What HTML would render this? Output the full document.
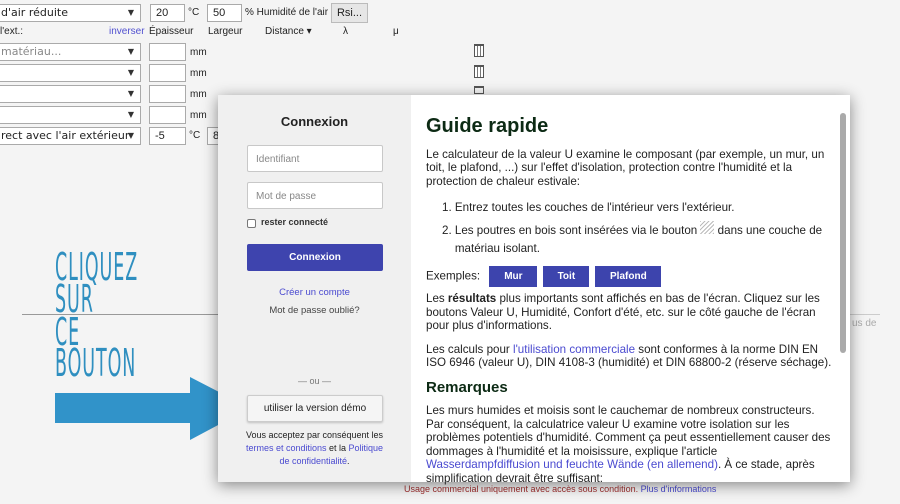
<!DOCTYPE html>
<html><head><meta charset="utf-8"><style>
*{margin:0;padding:0;box-sizing:border-box}
body{width:900px;height:504px;overflow:hidden;background:#f4f4f4;font-family:"Liberation Sans",Arial,sans-serif;position:relative;color:#222}
.a{position:absolute}
.sel{position:absolute;background:#fff;border:1px solid #aaa;height:18px;line-height:16px;padding-left:2px;font-family:"DejaVu Sans",sans-serif;font-size:11px}
.sel:after{content:"▼";position:absolute;right:6px;top:0;font-size:8px;color:#333}
.in{position:absolute;background:#fff;border:1px solid #aaa;height:18px;font-size:11px;line-height:16px;padding-left:5px}
.s{font-size:10px;position:absolute}
.cl{position:absolute;left:55px;color:#2f8fc0;font-size:38px;line-height:34px;font-family:"DejaVu Sans",sans-serif;font-weight:normal;transform:scaleX(0.46);transform-origin:left;letter-spacing:2px}
.modal{position:absolute;left:218px;top:95px;width:632px;height:387px;background:#fff;box-shadow:0 3px 14px rgba(0,0,0,.45)}
.lp{position:absolute;left:0;top:0;width:193px;height:387px;background:#f0f0f0;text-align:center}
.fi{position:absolute;left:29px;width:136px;height:27px;background:#fff;border:1px solid #c8c8c8;border-radius:2px;font-size:10px;color:#888;text-align:left;padding:8px 8px}
.btn{position:absolute;left:29px;width:136px;height:27px;border-radius:2px;font-size:11px}
.rp{position:absolute;left:208px;top:0;width:408px;font-size:11.6px;line-height:13.5px;color:#222}
.rp p{margin-bottom:10px}
a{color:#4a4ad0;text-decoration:none}
.eb{display:inline-block;background:#3d44ad;color:#fff;font-weight:bold;font-size:10px;height:21px;line-height:21px;text-align:center;margin-left:6px;vertical-align:middle}
</style></head><body>
<div class="sel" style="left:-2px;top:4px;width:143px;height:18px">d'air réduite</div>
<div class="in" style="left:150px;top:4px;width:35px">20</div><div class="s" style="left:188px;top:7px">°C</div>
<div class="in" style="left:207px;top:4px;width:35px">50</div><div class="s" style="left:245px;top:7px">% Humidité de l'air</div>
<div class="a" style="left:331px;top:3px;width:37px;height:20px;background:#e6e6e6;border:1px solid #bbb;font-size:11px;line-height:18px;text-align:center">Rsi...</div>
<div class="s" style="left:0;top:26px">l'ext.:</div>
<div class="s" style="left:109px;top:26px;color:#5050d0">inverser</div>
<div class="s" style="left:149px;top:26px">Épaisseur</div>
<div class="s" style="left:208px;top:26px">Largeur</div>
<div class="s" style="left:265px;top:26px">Distance ▾</div>
<div class="s" style="left:343px;top:26px">λ</div>
<div class="s" style="left:393px;top:26px">μ</div>
<div class="sel" style="left:-2px;top:43px;width:143px;color:#888">matériau...</div>
<div class="in" style="left:149px;top:43px;width:37px"></div><div class="s" style="left:190px;top:47px">mm</div>
<div class="sel" style="left:-2px;top:64px;width:143px"></div>
<div class="in" style="left:149px;top:64px;width:37px"></div><div class="s" style="left:190px;top:68px">mm</div>
<div class="sel" style="left:-2px;top:85px;width:143px"></div>
<div class="in" style="left:149px;top:85px;width:37px"></div><div class="s" style="left:190px;top:89px">mm</div>
<div class="sel" style="left:-2px;top:106px;width:143px"></div>
<div class="in" style="left:149px;top:106px;width:37px"></div><div class="s" style="left:190px;top:110px">mm</div>
<div class="sel" style="left:-2px;top:127px;width:143px">rect avec l'air extérieur</div>
<div class="in" style="left:149px;top:127px;width:37px">-5</div><div class="s" style="left:189px;top:130px">°C</div>
<div class="in" style="left:207px;top:127px;width:20px">8</div>
<div class="a" style="left:474px;top:44px;width:10px;height:13px;border:1px solid #555;border-top:2px solid #555;background:repeating-linear-gradient(90deg,#fff 0 2px,#777 2px 3px)"></div>
<div class="a" style="left:474px;top:65px;width:10px;height:13px;border:1px solid #555;border-top:2px solid #555;background:repeating-linear-gradient(90deg,#fff 0 2px,#777 2px 3px)"></div>
<div class="a" style="left:474px;top:86px;width:10px;height:8px;border:1px solid #555;border-top:2px solid #555"></div>
<div class="a" style="left:22px;top:314px;width:200px;height:1px;background:#999"></div>
<div class="a" style="left:850px;top:314px;width:30px;height:1px;background:#ccc"></div>
<div class="s" style="left:852px;top:318px;color:#aaa">us de</div>
<div class="cl" style="top:250px">CLIQUEZ</div>
<div class="cl" style="top:282px">SUR</div>
<div class="cl" style="top:315px">CE</div>
<div class="cl" style="top:346px">BOUTON</div>
<svg class="a" style="left:0;top:0" width="900" height="504"><polygon points="55,393 190,393 190,377 250,408 190,440 190,423 55,423" fill="#3193c9"/></svg>
<div class="a" style="left:404px;top:484px;font-size:9px;color:#a03030">Usage commercial uniquement avec accès sous condition. <span style="color:#4a4ad0">Plus d'informations</span></div>
<div class="modal">
<div class="lp">
<div class="a" style="left:0;width:193px;top:19px;font-size:13px;font-weight:bold">Connexion</div>
<div class="fi" style="top:50px">Identifiant</div>
<div class="fi" style="top:87px">Mot de passe</div>
<div class="a" style="left:29px;top:124px;width:9px;height:9px;border:1px solid #777;background:#fff;border-radius:2px"></div>
<div class="a" style="left:43px;top:122px;font-size:9px;font-weight:bold;color:#333">rester connecté</div>
<div class="btn" style="top:149px;background:#3e44ae;color:#fff;font-weight:bold;line-height:27px;font-size:10px">Connexion</div>
<div class="a" style="left:0;width:193px;top:192px;font-size:9.5px;color:#4a4ad0">Créer un compte</div>
<div class="a" style="left:0;width:193px;top:210px;font-size:9.5px;color:#444">Mot de passe oublié?</div>
<div class="a" style="left:0;width:193px;top:281px;font-size:9px;color:#777">— ou —</div>
<div class="btn" style="top:300px;background:#f5f5f5;border:1px solid #ccc;line-height:25px;font-size:10px;box-shadow:0 1px 2px rgba(0,0,0,.2)">utiliser la version démo</div>
<div class="a" style="left:0;width:193px;top:334px;font-size:9px;line-height:13px;color:#222">Vous acceptez par conséquent les<br><a>termes et conditions</a> et la <a>Politique</a><br><a>de confidentialité</a>.</div>
</div>
<div class="rp">
<div style="font-size:20px;font-weight:bold;color:#0c2a14;margin-top:25px;margin-bottom:14px">Guide rapide</div>
<p>Le calculateur de la valeur U examine le composant (par exemple, un mur, un toit, le plafond, ...) sur l'effet d'isolation, protection contre l'humidité et la protection de chaleur estivale:</p>
<div style="padding-left:16px;line-height:20px;margin-top:9px;margin-bottom:3px">1. Entrez toutes les couches de l'intérieur vers l'extérieur.</div>
<div style="padding-left:16px;line-height:18px">2. Les poutres en bois sont insérées via le bouton <span style="display:inline-block;width:14px;height:13px;background:repeating-linear-gradient(135deg,#bbb 0 1px,#fff 1px 3px)"></span> dans une couche de<br>&nbsp;&nbsp;&nbsp;&nbsp;matériau isolant.</div>
<p style="margin-top:8px;margin-bottom:5px">Exemples: <span class="eb" style="width:48px">Mur</span><span class="eb" style="width:46px">Toit</span><span class="eb" style="width:66px">Plafond</span></p>
<p>Les <b>résultats</b> plus importants sont affichés en bas de l'écran. Cliquez sur les boutons Valeur U, Humidité, Confort d'été, etc. sur le côté gauche de l'écran pour plus d'informations.</p>
<p>Les calculs pour <a>l'utilisation commerciale</a> sont conformes à la norme DIN EN ISO 6946 (valeur U), DIN 4108-3 (humidité) et DIN 68800-2 (réserve séchage).</p>
<div style="font-size:15px;font-weight:bold;color:#0c2a14;margin:11px 0 10px">Remarques</div>
<p>Les murs humides et moisis sont le cauchemar de nombreux constructeurs. Par conséquent, la calculatrice valeur U examine votre isolation sur les problèmes potentiels d'humidité. Comment ça peut essentiellement causer des dommages à l'humidité et la moisissure, explique l'article <a>Wasserdampfdiffusion und feuchte Wände (en allemend)</a>. À ce stade, après simplification devrait être suffisant:</p>
</div>
<div class="a" style="left:618px;top:0;width:14px;height:387px;background:#fff"></div>
<div class="a" style="left:622px;top:18px;width:6px;height:240px;background:#aaa;border-radius:3px"></div>
</div>
</body></html>
